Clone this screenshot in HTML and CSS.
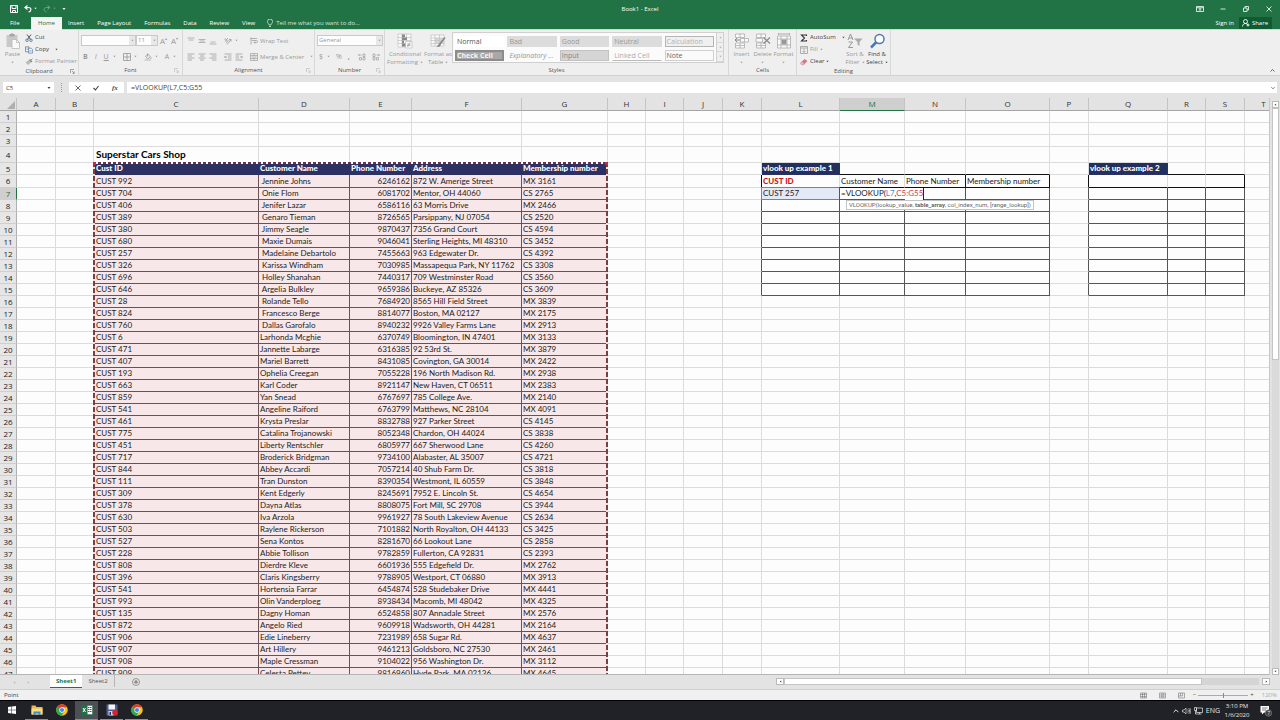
FILE: index.html
```html
<!DOCTYPE html>
<html lang="en">
<head>
    <meta charset="UTF-8">
    <title>Book1 - Excel</title>
    <link rel="stylesheet" href="styles.css">
</head>
<body>
<svg class="sprite" aria-hidden="true">
    <symbol id="i-save" viewBox="0 0 16 16"><path d="M1 1h14v14H1zM4 1v6h8V1M5 15v-4h6v4" fill="none" stroke="currentColor" stroke-width="2"/></symbol>
    <symbol id="i-undo" viewBox="0 0 16 16"><path d="M7 1L2 5l5 4M2 5h7c7 0 6 8 0 9" fill="none" stroke="currentColor" stroke-width="2.4"/></symbol>
    <symbol id="i-redo" viewBox="0 0 16 16"><path d="M9 1l5 4-5 4M14 5H7c-7 0-6 8 0 9" fill="none" stroke="currentColor" stroke-width="2"/></symbol>
    <symbol id="i-down" viewBox="0 0 8 8"><path d="M1 2h6L4 6z" fill="currentColor"/></symbol>
    <symbol id="i-left" viewBox="0 0 8 8"><path d="M6 1v6L2 4z" fill="currentColor"/></symbol>
    <symbol id="i-right" viewBox="0 0 8 8"><path d="M2 1v6l4-3z" fill="currentColor"/></symbol>
    <symbol id="i-up" viewBox="0 0 8 8"><path d="M1 6h6L4 2z" fill="currentColor"/></symbol>
    <symbol id="i-chev-up" viewBox="0 0 10 10"><path d="M1 7l4-4 4 4" fill="none" stroke="currentColor" stroke-width="1.6"/></symbol>
    <symbol id="i-chev-down" viewBox="0 0 10 10"><path d="M1 3l4 4 4-4" fill="none" stroke="currentColor" stroke-width="1.8"/></symbol>
    <symbol id="i-launch" viewBox="0 0 10 10"><path d="M1 8V1h7M4 4l4 4M8.500 5v4H5" fill="none" stroke="currentColor"/></symbol>
    <symbol id="i-bulb" viewBox="0 0 12 16"><path d="M4 12c0-3-3-3-3-7a5 5 0 0 1 10 0c0 4-3 4-3 7zM4 15h4" fill="none" stroke="currentColor" stroke-width="1.6"/></symbol>
    <symbol id="i-person" viewBox="0 0 16 16"><circle cx="7" cy="5" r="4" fill="none" stroke="currentColor" stroke-width="1.8"/><path d="M1 15c0-4 3-6 6-6s4 2 5 3M12 9v6M9 12h6" fill="none" stroke="currentColor" stroke-width="1.8"/></symbol>
    <symbol id="i-ribbon" viewBox="0 0 16 12"><path d="M1 1h14v10H1zM1 3.500h14M8 10V5M5.500 7L8 5l2.500 2" fill="none" stroke="currentColor" stroke-width="1.6"/></symbol>
    <symbol id="i-min" viewBox="0 0 12 12"><path d="M1 6h10" stroke="currentColor" stroke-width="1.6"/></symbol>
    <symbol id="i-max" viewBox="0 0 12 12"><path d="M1 4h7v7H1zM4 4V1h7v7H8" fill="none" stroke="currentColor" stroke-width="1.6"/></symbol>
    <symbol id="i-close" viewBox="0 0 12 12"><path d="M1 1l10 10M11 1L1 11" stroke="currentColor" stroke-width="1.6"/></symbol>
    <symbol id="i-check" viewBox="0 0 12 12"><path d="M1 6l4 4 6-8" fill="none" stroke="currentColor" stroke-width="2.2"/></symbol>
    <symbol id="i-paste" viewBox="0 0 28 32"><path d="M1 4h22v24H1z" fill="#c9c9c9"/><path d="M7 2h3c0-2 4-2 4 0h3v5H7z" fill="#a5a5a5"/><path d="M12 13h9l6 6v12H12z" fill="#fafafa" stroke="#b5b5b5" stroke-width="1.500"/><path d="M21 13v6h6" fill="none" stroke="#b5b5b5" stroke-width="1.500"/></symbol>
    <symbol id="i-cut" viewBox="0 0 16 16"><path d="M4 1l7 10M12 1L5 11" stroke="#444" stroke-width="1.8"/><circle cx="4" cy="12.500" r="2.500" fill="none" stroke="#3a6ea5" stroke-width="1.6"/><circle cx="12" cy="12.500" r="2.500" fill="none" stroke="#3a6ea5" stroke-width="1.6"/></symbol>
    <symbol id="i-copy" viewBox="0 0 18 16"><path d="M1 1h8v11H1z" fill="#fff" stroke="#555" stroke-width="1.4"/><path d="M8 4h6l3 3v8H8z" fill="#fff" stroke="#3a6ea5" stroke-width="1.4"/><path d="M3 4h4M3 7h4M10 9h5M10 12h5" stroke="#3a6ea5"/></symbol>
    <symbol id="i-brush" viewBox="0 0 16 16"><path d="M1 9l6-5 5 5-6 5z" fill="#bbb"/><path d="M8 4l2-2 5 5-3 2z" fill="#888"/><path d="M12 4l3-3" stroke="#999" stroke-width="2"/></symbol>
    <symbol id="i-border" viewBox="0 0 16 16"><path d="M1 1h14v14H1zM8 1v14M1 8h14" fill="none" stroke="#8a8a8a" stroke-width="1.400"/></symbol>
    <symbol id="i-fillc" viewBox="0 0 16 16"><path d="M3 6l5-4 5 6-6 4zM7 1v6M14 9v3" fill="none" stroke="#999" stroke-width="1.500"/><path d="M1 14h13" stroke="#ccc" stroke-width="3"/></symbol>
    <symbol id="i-lines-top" viewBox="0 0 16 16"><path d="M1 2h14M3 6h10" stroke="#a5a5a5" stroke-width="1.6"/></symbol>
    <symbol id="i-lines-mid" viewBox="0 0 16 16"><path d="M1 5h14M3 8h10M1 11h14" stroke="#a5a5a5" stroke-width="1.6"/></symbol>
    <symbol id="i-lines-bot" viewBox="0 0 16 16"><path d="M3 10h10M1 14h14" stroke="#a5a5a5" stroke-width="1.6"/></symbol>
    <symbol id="i-al-left" viewBox="0 0 16 16"><path d="M1 2h14M1 6h9M1 10h14M1 14h9" stroke="#a0a0a0" stroke-width="1.6"/></symbol>
    <symbol id="i-al-center" viewBox="0 0 16 16"><path d="M1 2h14M4 6h8M1 10h14M4 14h8" stroke="#a0a0a0" stroke-width="1.6"/></symbol>
    <symbol id="i-al-right" viewBox="0 0 16 16"><path d="M1 2h14M6 6h9M1 10h14M6 14h9" stroke="#a0a0a0" stroke-width="1.6"/></symbol>
    <symbol id="i-orient" viewBox="0 0 16 16"><path d="M2 9l6-7M4 12l5-6M1 5c2-3 5 0 3 3M6 15L14 5M10 5h4v4" fill="none" stroke="#999" stroke-width="1.6"/></symbol>
    <symbol id="i-indent" viewBox="0 0 16 16"><path d="M1 2h14M8 6h7M8 10h7M1 14h14M6 8H1M3 6L1 8l2 2" fill="none" stroke="#999" stroke-width="1.500"/></symbol>
    <symbol id="i-wrap" viewBox="0 0 16 16"><path d="M2 1v14M1 3h13M4 7h9c3 0 3 4 0 4H8M10 9l-2 2 2 2" fill="none" stroke="#999" stroke-width="1.500"/></symbol>
    <symbol id="i-merge" viewBox="0 0 16 16"><path d="M1 1h14v14H1zM1 5h14M1 11h14M8 1v4M8 11v4M3 8h10" fill="none" stroke="#999" stroke-width="1.300"/></symbol>
    <symbol id="i-dec" viewBox="0 0 16 16"><path d="M1 4h6M3 2L1 4l2 2M10 2h4v5h-4zM3 9h4v5H3zM10 9h4v5h-4z" fill="none" stroke="#999" stroke-width="1.300"/></symbol>
    <symbol id="i-cond" viewBox="0 0 32 32"><path d="M2 2h26v26H2zM2 9h26M2 15h26M2 21h26M10 2v26M19 2v26" fill="#fafafa" stroke="#aaa"/><path d="M10 3h6v5h-6zM10 9h10v5H10zM10 15h4v5h-4zM10 21h8v6h-8z" fill="#888"/><path d="M17 17h13v13H17z" fill="#fafafa" stroke="#aaa"/><path d="M20 22h7M20 25h7M26 19l-5 9" stroke="#777"/></symbol>
    <symbol id="i-fmt" viewBox="0 0 32 32"><path d="M2 4h26v22H2zM2 10h26M2 15h26M2 21h26M10 4v22M19 4v22" fill="#fafafa" stroke="#aaa"/><path d="M10 10h18v11H10z" fill="#c4c4c4" fill-opacity=".7"/><path d="M29 8L19 20l-6 8c5 1 9-2 9-6l9-12z" fill="#888"/></symbol>
    <symbol id="i-cell-ins" viewBox="0 0 32 32"><path d="M3 2h18v7H3zM12 2v7M3 20h18v10H3zM3 25h18M12 20v10M13 11h16v7H13zM21 11v7" fill="#fafafa" stroke="#aaa" stroke-width="1.500"/><path d="M12 14H2M6 10l-4 4 4 4" fill="none" stroke="#888" stroke-width="2"/></symbol>
    <symbol id="i-cell-del" viewBox="0 0 32 32"><path d="M3 2h18v7H3zM12 2v7M3 20h18v10H3zM3 25h18M12 20v10M2 11h13v7H2z" fill="#fafafa" stroke="#aaa" stroke-width="1.500"/><path d="M17 9l13 12M30 9L17 21" fill="none" stroke="#888" stroke-width="2.400"/></symbol>
    <symbol id="i-cell-fmt" viewBox="0 0 32 32"><path d="M3 6h26v24H3zM3 12h26M3 24h26M10 6v24M22 6v24" fill="#fafafa" stroke="#aaa" stroke-width="1.500"/><path d="M11 13h10v10H11z" fill="#999"/><path d="M5 2h22M5 0v4M27 0v4" stroke="#999" stroke-width="1.500"/></symbol>
    <symbol id="i-fill" viewBox="0 0 16 16"><path d="M1 1h14v14H1zM1 4h14M8 5v8M5 10l3 3 3-3" fill="none" stroke="#999" stroke-width="1.500"/></symbol>
    <symbol id="i-sum" viewBox="0 0 14 16"><path d="M12 4V2H2l6 6-6 6h10v-2" fill="none" stroke="#333" stroke-width="2.200"/></symbol>
    <symbol id="i-erase" viewBox="0 0 16 16"><path d="M1 10l8-8 6 4-8 8H4z" fill="#e0718c"/><path d="M1 10l3-3 5 5-2 2H4z" fill="#f3bcc9" stroke="#a06070" stroke-width=".6"/></symbol>
    <symbol id="i-sort" viewBox="0 0 32 32"><path d="M2 14L7 2l5 12M4 10h7M3 18h8L3 29h9" fill="none" stroke="#999" stroke-width="2"/><path d="M14 11h17l-6 7v8l-4-3v-5z" fill="#aaa"/></symbol>
    <symbol id="i-find" viewBox="0 0 32 32"><path d="M15 18L4 29" stroke="#4a78b5" stroke-width="5"/><circle cx="21" cy="12" r="9" fill="#fdfdfd" stroke="#4a78b5" stroke-width="3"/></symbol>
    <symbol id="i-plus" viewBox="0 0 16 16"><circle cx="8" cy="8" r="7" fill="none" stroke="#777" stroke-width="1.400"/><path d="M8 4v8M4 8h8" stroke="#666" stroke-width="1.800"/></symbol>
    <symbol id="i-view1" viewBox="0 0 14 12"><path d="M1 1h12v10H1zM1 4h12M1 8h12M5 1v10M9 1v10" fill="none" stroke="#777" stroke-width="1.200"/></symbol>
    <symbol id="i-view2" viewBox="0 0 14 12"><path d="M1 1h12v10H1zM4 3h6v6H4zM5 5h4M5 7h4" fill="none" stroke="#777" stroke-width="1.200"/></symbol>
    <symbol id="i-view3" viewBox="0 0 14 12"><path d="M1 1h12v10H1zM5 1v6M9 1v6H1" fill="none" stroke="#777" stroke-width="1.200"/></symbol>
    <symbol id="i-win" viewBox="0 0 16 16"><path d="M0 2.200l7-1v6.300H0zM8 1l8-1v7.500H8zM0 8.500h7v6.300l-7-1zM8 8.500h8V16l-8-1z" fill="#fff"/></symbol>
    <symbol id="i-folder" viewBox="0 0 24 22"><path d="M1 2h8l2 3h12v15H1z" fill="#e8b84a"/><path d="M1 8h22v12H1z" fill="#fbdc83"/><path d="M5 21v-7h14v7h-4v-3H9v3z" fill="#3b8fd0"/></symbol>
    <symbol id="i-chrome" viewBox="0 0 24 24"><circle cx="12" cy="12" r="11.500" fill="#fbc116"/><path d="M12 12L2 6.200a11.500 11.500 0 0 0 9 17.200l5.500-9z" fill="#2da94f"/><path d="M2 6.200A11.500 11.500 0 0 1 22 6.300H12L7 9.500z" fill="#e33b2e"/><circle cx="12" cy="12" r="5.300" fill="#fff"/><circle cx="12" cy="12" r="4.200" fill="#4285f4"/></symbol>
    <symbol id="i-excel" viewBox="0 0 24 22"><path d="M11 2h12v18H11z" fill="#fff" stroke="#1f7145"/><path d="M14 5h3v2h-3zM18 5h3v2h-3zM14 9h3v2h-3zM18 9h3v2h-3zM14 13h3v2h-3zM18 13h3v2h-3z" fill="#1f7145"/><path d="M0 2l13-2v22L0 20z" fill="#1f7145"/><path d="M4 7l5 8M9 7l-5 8" stroke="#fff" stroke-width="2"/></symbol>
    <symbol id="i-disk" viewBox="0 0 24 24"><path d="M1 1h22v22H1z" fill="#4a5f9c"/><path d="M5 1h13v10H5z" fill="#f2f4fa"/><path d="M5 14h10v9H5z" fill="#cfd6e8"/><path d="M7 16h3v6H7z" fill="#26345f"/><circle cx="18" cy="17" r="5.500" fill="#d8232a"/></symbol>
    <symbol id="i-vol" viewBox="0 0 18 14"><path d="M1 5h3l4-4v12L4 9H1zM11 4c2 2 2 4 0 6M13 2c3 3 3 7 0 10M15.500 1c3 4 3 8 0 12" fill="none" stroke="#e8e8e8" stroke-width="1.300"/></symbol>
    <symbol id="i-net" viewBox="0 0 18 16"><path d="M5 2h12v9H5zM11 11v3M7 14h8M1 1h4v6H1zM3 7v7h4" fill="none" stroke="#e8e8e8" stroke-width="1.400"/></symbol>
    <symbol id="i-note" viewBox="0 0 24 24"><path d="M1 2h17v13H8l-4 4v-4H1z" fill="#fff"/><path d="M4 6h11M4 10h8" stroke="#333" stroke-width="1.300"/><circle cx="17" cy="16" r="6.500" fill="#3c3e43" stroke="#999"/></symbol>
</svg>

<header class="top">
    <div class="titlebar">
        <div class="qat">
            <button aria-label="Save"><svg class="ic8"><use href="#i-save"/></svg></button>
            <button aria-label="Undo"><svg class="ic8"><use href="#i-undo"/></svg><svg class="ic3"><use href="#i-down"/></svg></button>
            <button class="dim" aria-label="Redo"><svg class="ic8"><use href="#i-redo"/></svg><svg class="ic3"><use href="#i-down"/></svg></button>
            <button aria-label="Customize"><svg class="ic4"><use href="#i-down"/></svg></button>
        </div>
        <div class="title">Book1 - Excel</div>
        <div class="winbtns">
            <button aria-label="Ribbon options"><svg class="ic8"><use href="#i-ribbon"/></svg></button>
            <button aria-label="Minimize"><svg class="ic6"><use href="#i-min"/></svg></button>
            <button aria-label="Restore"><svg class="ic6"><use href="#i-max"/></svg></button>
            <button aria-label="Close"><svg class="ic6"><use href="#i-close"/></svg></button>
        </div>
    </div>
    <nav class="tabs">
        <a class="file" href="#">File</a>
        <a class="active" href="#">Home</a>
        <a href="#">Insert</a>
        <a href="#">Page Layout</a>
        <a href="#">Formulas</a>
        <a href="#">Data</a>
        <a href="#">Review</a>
        <a href="#">View</a>
        <a class="tell" href="#"><svg class="ic8"><use href="#i-bulb"/></svg>Tell me what you want to do...</a>
        <a class="signin" href="#">Sign in</a>
        <a class="share" href="#"><svg class="ic8"><use href="#i-person"/></svg>Share</a>
    </nav>
</header>

<section class="ribbon">
    <div class="group clipboard">
        <div class="body">
            <button class="big off"><svg class="ic16"><use href="#i-paste"/></svg>Paste<svg class="ic3"><use href="#i-down"/></svg></button>
            <div class="stack">
                <button><svg class="ic8"><use href="#i-cut"/></svg>Cut</button>
                <button><svg class="ic8"><use href="#i-copy"/></svg>Copy<svg class="ic3 gapl"><use href="#i-down"/></svg></button>
                <button class="off"><svg class="ic8"><use href="#i-brush"/></svg>Format Painter</button>
            </div>
        </div>
        <div class="name">Clipboard<svg class="launch"><use href="#i-launch"/></svg></div>
    </div>
    <div class="group font">
        <div class="body rows">
            <div class="line">
                <span class="combo"><select class="fontname" aria-label="Font" disabled><option></option></select><i><svg class="ic3"><use href="#i-down"/></svg></i></span>
                <span class="combo"><select class="fontsize" aria-label="Font size" disabled><option>11</option></select><i><svg class="ic3"><use href="#i-down"/></svg></i></span>
                <button class="off grow" aria-label="Grow font">A<sup>▴</sup></button>
                <button class="off shrink" aria-label="Shrink font">A<sup>▾</sup></button>
            </div>
            <div class="line glyphs">
                <button class="off"><b>B</b></button>
                <button class="off"><i>I</i></button>
                <button class="off"><u>U</u><svg class="ic3 gapl"><use href="#i-down"/></svg></button>
                <button class="off sep" aria-label="Borders"><svg class="ic8"><use href="#i-border"/></svg><svg class="ic3 gapl"><use href="#i-down"/></svg></button>
                <button class="off sep" aria-label="Fill colour"><svg class="ic8"><use href="#i-fillc"/></svg><svg class="ic3 gapl"><use href="#i-down"/></svg></button>
                <button class="off">A<svg class="ic3 gapl"><use href="#i-down"/></svg></button>
            </div>
        </div>
        <div class="name">Font<svg class="launch pale"><use href="#i-launch"/></svg></div>
    </div>
    <div class="group align">
        <div class="body cols">
            <div class="rows">
                <div class="line tools">
                    <button aria-label="Top align"><svg class="ic8"><use href="#i-lines-top"/></svg></button>
                    <button aria-label="Middle align"><svg class="ic8"><use href="#i-lines-mid"/></svg></button>
                    <button aria-label="Bottom align"><svg class="ic8"><use href="#i-lines-bot"/></svg></button>
                    <button class="sep off" aria-label="Orientation"><svg class="ic8"><use href="#i-orient"/></svg><svg class="ic3"><use href="#i-down"/></svg></button>
                </div>
                <div class="line tools">
                    <button aria-label="Align left"><svg class="ic8"><use href="#i-al-left"/></svg></button>
                    <button aria-label="Center"><svg class="ic8"><use href="#i-al-center"/></svg></button>
                    <button aria-label="Align right"><svg class="ic8"><use href="#i-al-right"/></svg></button>
                    <button class="sep" aria-label="Decrease indent"><svg class="ic8"><use href="#i-indent"/></svg></button>
                    <button aria-label="Increase indent"><svg class="ic8 flip"><use href="#i-indent"/></svg></button>
                </div>
            </div>
            <div class="rows wraps">
                <div class="line"><button class="off"><svg class="ic8"><use href="#i-wrap"/></svg>Wrap Text</button></div>
                <div class="line"><button class="off"><svg class="ic8"><use href="#i-merge"/></svg>Merge &amp; Center<svg class="ic3 gapl"><use href="#i-down"/></svg></button></div>
            </div>
        </div>
        <div class="name">Alignment<svg class="launch pale"><use href="#i-launch"/></svg></div>
    </div>
    <div class="group number">
        <div class="body rows">
            <div class="line"><span class="combo"><select class="numfmt" aria-label="Number format" disabled><option>General</option></select><i><svg class="ic3"><use href="#i-down"/></svg></i></span></div>
            <div class="line glyphs money">
                <button class="off">$<svg class="ic3 gapl"><use href="#i-down"/></svg></button>
                <button class="off">%</button>
                <button class="off"><b>,</b></button>
                <button class="off sep" aria-label="Increase decimal"><svg class="ic8"><use href="#i-dec"/></svg></button>
                <button class="off" aria-label="Decrease decimal"><svg class="ic8 flip"><use href="#i-dec"/></svg></button>
            </div>
        </div>
        <div class="name">Number<svg class="launch pale"><use href="#i-launch"/></svg></div>
    </div>
    <div class="group styles">
        <div class="body">
            <button class="big off"><svg class="ic16"><use href="#i-cond"/></svg>Conditional<span>Formatting <svg class="ic3"><use href="#i-down"/></svg></span></button>
            <button class="big off"><svg class="ic16"><use href="#i-fmt"/></svg>Format as<span>Table <svg class="ic3"><use href="#i-down"/></svg></span></button>
            <div class="gallery">
                <button class="s-normal">Normal</button>
                <button class="s-fill">Bad</button>
                <button class="s-fill">Good</button>
                <button class="s-fill">Neutral</button>
                <button class="s-calc">Calculation</button>
                <button class="s-check">Check Cell</button>
                <button class="s-expl">Explanatory ...</button>
                <button class="s-input">Input</button>
                <button class="s-link">Linked Cell</button>
                <button class="s-note">Note</button>
            </div>
            <div class="spin">
                <button aria-label="Previous styles"><svg class="ic3"><use href="#i-up"/></svg></button>
                <button aria-label="Next styles"><svg class="ic3"><use href="#i-down"/></svg></button>
                <button aria-label="More styles"><svg class="ic3"><use href="#i-down"/></svg></button>
            </div>
        </div>
        <div class="name">Styles</div>
    </div>
    <div class="group cells">
        <div class="body">
            <button class="big off"><svg class="ic16"><use href="#i-cell-ins"/></svg>Insert<svg class="ic3"><use href="#i-down"/></svg></button>
            <button class="big off"><svg class="ic16"><use href="#i-cell-del"/></svg>Delete<svg class="ic3"><use href="#i-down"/></svg></button>
            <button class="big off"><svg class="ic16"><use href="#i-cell-fmt"/></svg>Format<svg class="ic3"><use href="#i-down"/></svg></button>
        </div>
        <div class="name">Cells</div>
    </div>
    <div class="group editing">
        <div class="body">
            <div class="stack">
                <button><svg class="ic8"><use href="#i-sum"/></svg>AutoSum<svg class="ic3 gapl"><use href="#i-down"/></svg></button>
                <button class="off"><svg class="ic8"><use href="#i-fill"/></svg>Fill<svg class="ic3"><use href="#i-down"/></svg></button>
                <button><svg class="ic8"><use href="#i-erase"/></svg>Clear<svg class="ic3"><use href="#i-down"/></svg></button>
            </div>
            <button class="big off"><svg class="ic16"><use href="#i-sort"/></svg>Sort &amp;<span>Filter <svg class="ic3"><use href="#i-down"/></svg></span></button>
            <button class="big"><svg class="ic16"><use href="#i-find"/></svg>Find &amp;<span>Select <svg class="ic3"><use href="#i-down"/></svg></span></button>
        </div>
        <div class="name">Editing</div>
    </div>
    <button class="collapse" aria-label="Collapse ribbon"><svg class="ic5"><use href="#i-chev-up"/></svg></button>
</section>

<section class="formulabar">
    <div class="namebox"><input type="text" value="C5" aria-label="Name box"><svg class="ic4"><use href="#i-down"/></svg></div>
    <span class="grip"></span>
    <div class="fxbtns">
        <button aria-label="Cancel"><svg class="ic6"><use href="#i-close"/></svg></button>
        <button aria-label="Enter"><svg class="ic6"><use href="#i-check"/></svg></button>
        <button class="fx">fx</button>
    </div>
    <input class="formula" type="text" value="=VLOOKUP(L7,C5:G55" aria-label="Formula bar">
    <button class="expand" aria-label="Expand formula bar"><svg class="ic4"><use href="#i-chev-down"/></svg></button>
</section>

<main class="work">
    <div class="sheet">
        <table id="grid">
            <colgroup id="cols"></colgroup>
            <thead><tr id="heads"></tr></thead>
            <tbody id="rows"></tbody>
        </table>
        <div class="ants"></div>
    </div>
    <div class="vscroll">
        <button aria-label="Scroll up"><svg class="ic3"><use href="#i-up"/></svg></button>
        <div class="track"><div class="thumb"></div></div>
        <button aria-label="Scroll down"><svg class="ic3"><use href="#i-down"/></svg></button>
    </div>
</main>

<div class="sheettabs">
    <div class="arrows"><svg class="ic3"><use href="#i-left"/></svg><svg class="ic3"><use href="#i-right"/></svg></div>
    <a class="active" href="#">Sheet1</a>
    <a href="#">Sheet2</a>
    <button class="add" aria-label="New sheet"><svg class="ic8"><use href="#i-plus"/></svg></button>
    <div class="hscroll">
        <button aria-label="Scroll left"><svg class="ic3"><use href="#i-left"/></svg></button>
        <div class="track"><div class="thumb"></div></div>
        <button aria-label="Scroll right"><svg class="ic3"><use href="#i-right"/></svg></button>
    </div>
</div>

<footer class="status">
    <span class="mode">Point</span>
    <button aria-label="Normal view"><svg class="ic7"><use href="#i-view1"/></svg></button>
    <button aria-label="Page layout view"><svg class="ic7"><use href="#i-view2"/></svg></button>
    <button aria-label="Page break view"><svg class="ic7"><use href="#i-view3"/></svg></button>
    <div class="zoom"><span>−</span><input type="range" min="10" max="400" value="205" aria-label="Zoom"><span>+</span></div>
    <span class="pct">120%</span>
</footer>

<div class="taskbar">
    <button aria-label="Start"><svg class="ic8"><use href="#i-win"/></svg></button>
    <button class="open" aria-label="File Explorer"><svg class="ic12"><use href="#i-folder"/></svg></button>
    <button aria-label="Chrome"><svg class="ic12"><use href="#i-chrome"/></svg></button>
    <button class="open current" aria-label="Excel"><svg class="ic12"><use href="#i-excel"/></svg></button>
    <button class="open" aria-label="Recorder"><svg class="ic12"><use href="#i-disk"/></svg></button>
    <button class="open" aria-label="Chrome window"><svg class="ic12"><use href="#i-chrome"/></svg></button>
    <div class="tray">
        <svg class="ic6"><use href="#i-chev-up"/></svg>
        <svg class="ic9"><use href="#i-vol"/></svg>
        <svg class="ic9"><use href="#i-net"/></svg>
        <span class="lang">ENG</span>
        <div class="clock">3:10 PM<br>1/6/2020</div>
        <div class="notes"><svg class="ic12"><use href="#i-note"/></svg><span>7</span></div>
    </div>
</div>
<script src="sheet.js"></script>
</body>
</html>
```
FILE: styles.css
```css
*{
    box-sizing: border-box;
}
body{
    margin: 0;
    height: 100vh;
    display: flex;
    flex-direction: column;
    overflow: hidden;
    background: #e3e3e3;
    color: #444;
    font: 6px/8px "Open Sans", "Noto Sans", sans-serif;
}
button,input,select{
    margin: 0;
    padding: 0;
    border: 0;
    background: none;
    color: inherit;
    font: inherit;
    border-radius: 0;
    outline: none;
}
button{
    display: flex;
    align-items: center;
    justify-content: center;
    white-space: nowrap;
}
a{
    color: inherit;
    text-decoration: none;
}
svg{
    flex: none;
    display: block;
}
.sprite{
    position: absolute;
    width: 0;
    height: 0;
}
.ic3{ width: 3px; height: 3px; }
.ic4{ width: 4px; height: 4px; }
.ic5{ width: 5px; height: 5px; }
.ic6{ width: 6px; height: 6px; }
.ic7{ width: 7px; height: 7px; }
.ic8{ width: 8px; height: 8px; }
.ic9{ width: 9px; height: 8px; }
.ic12{ width: 12px; height: 12px; }
.ic16{ width: 16px; height: 16px; }
.flip{ transform: scaleX(-1); }
.gapl{ margin-left: 4px; }

/* title bar and tabs */
.top{
    background: #217346;
    color: #fff;
    flex: none;
}
.titlebar{
    height: 17px;
    display: grid;
    grid-template-columns: 1fr auto 1fr;
    align-items: center;
}
.qat{
    display: flex;
    align-items: center;
    gap: 6px;
    padding-left: 10px;
}
.qat button{
    gap: 2px;
}
.qat .dim{
    opacity: .35;
}
.winbtns{
    display: flex;
    justify-content: flex-end;
}
.winbtns button{
    width: 23px;
    height: 14px;
}
.tabs{
    height: 13px;
    display: flex;
    line-height: 13px;
    border-bottom: 1px solid #c5dccf;
}
.tabs a{
    padding: 0 7px 0 6px;
    white-space: nowrap;
}
.tabs .file{
    width: 31px;
    padding: 0 0 0 10px;
}
.tabs .active{
    background: #f4f4f4;
    color: #217346;
    width: 31px;
    padding: 0;
    text-align: center;
    height: 13px;
}
.tabs .tell,.tabs .share{
    display: flex;
    align-items: center;
    gap: 2px;
}
.tabs .tell{
    padding-left: 4px;
}
.tell{
    color: #d5e6dc;
}
.tabs .signin{
    margin-left: auto;
    padding-right: 5px;
}
.tabs .share{
    background: #0f5c33;
    padding: 0 4px 0 3px;
    margin-right: 8px;
}

/* ribbon */
.ribbon{
    flex: none;
    height: 46px;
    display: flex;
    background: #efefef;
    border-bottom: 1px solid #d2d2d2;
}
.group{
    display: flex;
    flex-direction: column;
    border-right: 1px solid #d8d8d8;
    padding-top: 2px;
}
.group .body{
    height: 35px;
    display: flex;
}
.name{
    position: relative;
    line-height: 9px;
    text-align: center;
    color: #555;
}
.launch{
    position: absolute;
    right: 3px;
    top: 2px;
    width: 5px;
    height: 5px;
    color: #555;
}
.pale{
    color: #aaa;
}
.off{
    color: #999;
}
.big{
    flex-direction: column;
    justify-content: flex-start;
    padding-top: 1px;
    line-height: 8px;
}
.big .ic16{
    margin-bottom: 1px;
}
.big > .ic3{
    margin-top: 3px;
}
.big span{
    display: flex;
    align-items: center;
    gap: 2px;
}
.stack{
    display: flex;
    flex-direction: column;
    gap: 1px;
}
.stack button{
    justify-content: flex-start;
    height: 11px;
    gap: 2px;
    line-height: 11px;
}
.rows{
    display: flex;
    flex-direction: column;
}
.line{
    height: 15px;
    margin-top: 1px;
    display: flex;
    align-items: center;
}
.clipboard{ width: 79px; }
.clipboard .big{ width: 25px; }
.font{ width: 104px; }
.align{ width: 132px; }
.number{ width: 70px; }
.styles{ width: 344px; }
.cells{ width: 68px; }
.editing{ width: 94px; }
.group .rows.body{
    flex-direction: column;
    padding: 0 2px;
}
.combo{
    display: flex;
    height: 11px;
    border: 1px solid #c9c9c9;
    background: #fdfdfd;
}
.combo select{
    appearance: none;
    color: #999;
    opacity: 1;
    padding-left: 1px;
    line-height: 9px;
}
.combo i{
    display: flex;
    align-items: center;
    justify-content: center;
    width: 6px;
    background: #e8e8e8;
    color: #999;
}
.fontname{ width: 47px; }
.fontsize{ width: 14px; }
.numfmt{ width: 58px; }
.grow,.shrink{
    width: 12px;
    font-size: 8px;
}
sup{
    font-size: 4px;
    line-height: 4px;
    align-self: flex-start;
}
.glyphs{
    gap: 7px;
    padding-left: 2px;
    font-size: 7px;
}
.glyphs .sep .gapl{
    margin-left: 3px;
}
.money{
    gap: 6px;
}
.money .sep{
    margin-left: 2px;
}
.cols{
    padding-left: 4px;
    gap: 7px;
}
.tools{
    gap: 3px;
}
.tools .sep{
    margin-left: 4px;
    gap: 3px;
}
.wraps button{
    gap: 2px;
}
.styles .big{ width: 28px; }
.styles .big:first-child{ width: 38px; margin-left: 1px; }
.gallery{
    flex: 1;
    display: grid;
    grid-template-columns: repeat(5, 1fr);
    grid-template-rows: 11px 11px;
    gap: 3px;
    height: 31px;
    padding: 3px 2px;
    background: #fbfbfb;
    border: 1px solid #d0d0d0;
    font-size: 7px;
}
.gallery button{
    justify-content: flex-start;
    padding-left: 1px;
    min-width: 0;
    overflow: hidden;
    border: 1px solid transparent;
    color: #999;
}
.gallery .s-normal{ background: #fff; color: #555; }
.gallery .s-fill{ background: #dcdcdc; }
.gallery .s-calc{ background: #f0f0f0; border-color: #b5b5b5; color: #b0b0b0; }
.gallery .s-check{ background: #a8a8a8; border: 2px solid #8c8c8c; color: #f5f5f5; font-weight: bold; padding-left: 0; }
.gallery .s-expl{ font-style: italic; }
.gallery .s-input{ background: #d5d5d5; border-color: #c2c2c2; color: #888; }
.gallery .s-link{ border-bottom: 1px solid #bbb; color: #aaa; }
.gallery .s-note{ background: #fafafa; border-color: #cfcfcf; color: #666; }
.spin{
    width: 7px;
    height: 31px;
    margin: 0 4px 0 0;
    display: flex;
    flex-direction: column;
    border: 1px solid #d0d0d0;
    border-left: 0;
    color: #aaa;
}
.spin button{
    flex: 1;
    border-bottom: 1px solid #d8d8d8;
}
.cells .body{
    padding: 0 2px;
}
.cells .big{
    flex: 1;
}
.editing .body{
    padding-left: 3px;
}
.editing .stack{
    width: 44px;
}
.editing .big{
    width: 22px;
}
.collapse{
    margin: auto 5px 0 auto;
    height: 10px;
}

/* formula bar */
.formulabar{
    flex: none;
    height: 22px;
    padding: 6px 3px 5px;
    display: flex;
    align-items: stretch;
}
.namebox{
    width: 51px;
    display: flex;
    align-items: center;
    background: #fff;
    padding: 0 3px;
}
.namebox input{
    flex: 1;
    min-width: 0;
}
.grip{
    width: 1px;
    margin: 1px 7px;
    border-left: 1px dotted #999;
}
.fxbtns{
    display: flex;
    background: #fff;
    width: 55px;
    margin-right: 3px;
}
.fxbtns button{
    flex: 1;
}
.fx{
    font: italic bold 7px "Liberation Serif", serif;
}
.formula{
    flex: 1;
    background: #fff;
    padding-left: 4px;
    font-size: 7px;
}
.expand{
    background: #fff;
    width: 8px;
}

/* sheet */
.work{
    flex: 1;
    min-height: 0;
    display: flex;
}
.sheet{
    flex: 1;
    min-width: 0;
    overflow: hidden;
    position: relative;
    background: #fdfdfd;
    border-bottom: 1px solid #b5b5b5;
}
#grid{
    width: 1283px;
    table-layout: fixed;
    border-collapse: separate;
    border-spacing: 0;
    font: 8px/11px Lato, "Open Sans", sans-serif;
    color: #222;
}
#grid th,#grid td{
    padding: 0;
    height: 12px;
    border-right: 1px solid #dcdcdc;
    border-bottom: 1px solid #dcdcdc;
    white-space: pre;
    text-align: left;
}
#grid td{
    padding: 0 1px;
}
#grid thead th{
    height: 13px;
    background: #e3e3e3;
    border-right-color: #c4c4c4;
    border-bottom-color: #a5a5a5;
    font: 8px/12px "Open Sans", sans-serif;
    color: #333;
    text-align: center;
}
#grid tbody th{
    background: #e6e6e6;
    border-right-color: #b0b0b0;
    border-bottom-color: #cfcfcf;
    font: 8px/11px "Open Sans", sans-serif;
    text-align: center;
}
#grid thead th.corner{
    padding: 3px 2px 1px 7px;
}
.corner svg{
    width: 8px;
    height: 8px;
}
#grid th.on{
    background: #cfcfcf;
    color: #217346;
    border-bottom-color: #217346;
}
#grid tbody th.on{
    border-bottom-color: #cfcfcf;
    border-right-color: #217346;
}
#grid tr.tall th,#grid tr.tall td{
    height: 16px;
    line-height: 15px;
}
#grid tr.mid th,#grid tr.mid td{
    height: 13px;
    line-height: 12px;
}
#grid td.title{
    padding-left: 2px;
    font-size: 10px;
    font-weight: bold;
    color: #000;
}
#grid td.data{
    background: #f8e7e8;
    border-color: #6a5155;
}
#grid td.first{
    padding-left: 2px;
}
#grid td.num{
    text-align: right;
}
#grid td.dhead,#grid td.label{
    background: #2c3062;
    border-color: #2c3062;
    color: #fff;
    font-weight: 900;
}
#grid td.label{
    background: #20305f;
}
#grid td.thin-r{ border-right-color: #555; }
#grid td.thin-b{ border-bottom-color: #555; }
#grid td.thick-r{ border-right-color: #111; }
#grid td.thick-b{ border-bottom-color: #111; }
#grid td.red{
    color: #d0141b;
    font-weight: 900;
}
#grid td.ref,#grid td.edit{
    position: relative;
}
#grid td.ref{
    background: #e3e9f6;
}
.ref i{
    position: absolute;
    inset: -1px;
    border: 1px solid #5b86c8;
}
.edit .cell{
    position: absolute;
    z-index: 2;
    left: -1px;
    top: 0;
    height: 12px;
    padding-left: 2px;
    background: #fff;
    border-right: 1px solid #222;
}
.edit .frame{
    position: absolute;
    z-index: 3;
    inset: -1px;
    border-left: 1px solid #217346;
    border-bottom: 1px solid #217346;
}
.edit .cell .a{ color: #5b86c8; }
.edit .cell .b{ color: #c0404c; }
.tip{
    position: absolute;
    z-index: 4;
    left: 6px;
    top: 12px;
    padding: 0 2px;
    border: 1px solid #c4c4c4;
    background: #fff;
    color: #666;
    font: 6px/8px Roboto, sans-serif;
}
/* moving border round C5:G55 */
.ants{
    position: absolute;
    z-index: 1;
    left: 93px;
    top: 64px;
    width: 515px;
    height: 620px;
    background:
        linear-gradient(#c0303c, #c0303c) 0 0 / 3px 3px no-repeat,
        linear-gradient(#c0303c, #c0303c) 100% 0 / 3px 3px no-repeat,
        repeating-linear-gradient(90deg, #6e3145 0 3px, #fff 3px 5px) 0 0 / 100% 2px no-repeat,
        repeating-linear-gradient(#7a3f42 0 5px, #f3dcdc 5px 7px) 0 0 / 2px 100% no-repeat,
        repeating-linear-gradient(#7a3f42 0 5px, #f3dcdc 5px 7px) 100% 0 / 2px 100% no-repeat;
}
.vscroll{
    width: 11px;
    padding: 3px 1px 0 2px;
    display: flex;
    flex-direction: column;
    border-left: 1px solid #c8c8c8;
}
.vscroll button{
    height: 7px;
    background: #fff;
    border: 1px solid #bbb;
}
.vscroll .track{
    flex: 1;
    background: #dadada;
}
.vscroll .thumb{
    height: 45%;
    background: #fff;
    border: 1px solid #c4c4c4;
}

/* sheet tabs */
.sheettabs{
    flex: none;
    height: 15px;
    display: flex;
    border-bottom: 1px solid #d0d0d0;
    line-height: 13px;
}
.arrows{
    width: 50px;
    display: flex;
    align-items: center;
    gap: 11px;
    padding-left: 13px;
    color: #aaa;
}
.sheettabs a{
    padding: 0 6px;
    height: 12px;
    color: #555;
    border-right: 1px solid #b5b5b5;
}
.sheettabs a.active{
    height: 13px;
    background: #fff;
    color: #217346;
    font-weight: bold;
    border-right: 0;
    border-bottom: 1px solid #217346;
}
.add{
    margin-left: 17px;
}
.hscroll{
    width: 40%;
    margin-left: auto;
    padding: 3px 10px 4px 8px;
    display: flex;
}
.hscroll button{
    width: 8px;
    background: #fff;
    border: 1px solid #bbb;
}
.hscroll .track{
    flex: 1;
    background: #d5d5d5;
    margin-right: 3px;
}
.hscroll .thumb{
    width: 88%;
    height: 100%;
    background: #fff;
    border: 1px solid #c4c4c4;
}

/* status bar */
.status{
    flex: none;
    height: 10px;
    display: flex;
    align-items: center;
    gap: 12px;
    padding: 0 3px 0 4px;
    background: #f0f0f0;
}
.mode{
    margin-right: auto;
}
.zoom{
    display: flex;
    align-items: center;
    gap: 2px;
    margin-left: -4px;
}
.zoom input{
    appearance: none;
    width: 50px;
    height: 6px;
    background: linear-gradient(#aaa, #aaa) 0 3px / 100% 1px no-repeat;
}
.zoom input::-webkit-slider-thumb{
    appearance: none;
    width: 1px;
    height: 5px;
    background: #888;
}
.pct{
    color: #aaa;
    margin-left: -4px;
}

/* taskbar */
.taskbar{
    flex: none;
    height: 20px;
    display: flex;
    background: #202227;
    border-top: 1px solid #000;
    color: #e8e8e8;
}
.taskbar > button{
    width: 23px;
    margin-right: 2px;
    border-bottom: 1px solid transparent;
}
.taskbar .open{
    border-bottom-color: #5b9bd5;
}
.taskbar .current{
    background: #4a5053;
}
.tray{
    margin-left: auto;
    display: flex;
    align-items: center;
    gap: 3px;
    padding-right: 8px;
}
.lang,.clock{
    font-size: 7px;
    line-height: 9px;
}
.clock{
    width: 28px;
    text-align: center;
    font-size: 6px;
    margin-right: 6px;
}
.notes{
    position: relative;
}
.notes span{
    position: absolute;
    right: 2px;
    bottom: 0;
    font-size: 5px;
}
```
FILE: sheet.js
```js
var cols = 'ABCDEFGHIJKLMNOPQRST'.split('');
var widths = [39,38,165,91,62,110,86,38,38,39,39,78,65,61,84,39,79,38,39,38];
// first data row is sheet row 6
var data = [
    ['CUST 992',' Jennine Johns','6246162','872 W. Amerige Street','MX 3161'],
    ['CUST 704',' Onie Flom','6081702','Mentor, OH 44060','CS 2765'],
    ['CUST 406',' Jenifer Lazar','6586116','63 Morris Drive','MX 2466'],
    ['CUST 389',' Genaro Tieman','8726565','Parsippany, NJ 07054','CS 2520'],
    ['CUST 380',' Jimmy Seagle','9870437','7356 Grand Court','CS 4594'],
    ['CUST 680',' Maxie Dumais','9046041','Sterling Heights, MI 48310','CS 3452'],
    ['CUST 257',' Madelaine Debartolo','7455663','963 Edgewater Dr.','CS 4392'],
    ['CUST 326',' Karissa Windham','7030985','Massapequa Park, NY 11762','CS 3308'],
    ['CUST 696',' Holley Shanahan','7440317','709 Westminster Road','CS 3560'],
    ['CUST 646',' Argelia Bulkley','9659386','Buckeye, AZ 85326','CS 3609'],
    ['CUST 28',' Rolande Tello','7684920','8565 Hill Field Street','MX 3839'],
    ['CUST 824',' Francesco Berge','8814077','Boston, MA 02127','MX 2175'],
    ['CUST 760',' Dallas Garofalo','8940232','9926 Valley Farms Lane','MX 2913'],
    ['CUST 6','Larhonda Mcghie','6370749','Bloomington, IN 47401','MX 3133'],
    ['CUST 471','Jannette Labarge','6316385','92 53rd St.','MX 3879'],
    ['CUST 407','Mariel Barrett','8431085','Covington, GA 30014','MX 2422'],
    ['CUST 193','Ophelia Creegan','7055228','196 North Madison Rd.','MX 2938'],
    ['CUST 663','Karl Coder','8921147','New Haven, CT 06511','MX 2383'],
    ['CUST 859','Yan Snead','6767697','785 College Ave.','MX 2140'],
    ['CUST 541','Angeline Raiford','6763799','Matthews, NC 28104','MX 4091'],
    ['CUST 461','Krysta Preslar','8832788','927 Parker Street','CS 4145'],
    ['CUST 775','Catalina Trojanowski','8052348','Chardon, OH 44024','CS 3838'],
    ['CUST 451','Liberty Rentschler','6805977','667 Sherwood Lane','CS 4260'],
    ['CUST 717','Broderick Bridgman','9734100','Alabaster, AL 35007','CS 4721'],
    ['CUST 844','Abbey Accardi','7057214','40 Shub Farm Dr.','CS 3818'],
    ['CUST 111','Tran Dunston','8390354','Westmont, IL 60559','CS 3848'],
    ['CUST 309','Kent Edgerly','8245691','7952 E. Lincoln St.','CS 4654'],
    ['CUST 378','Dayna Atlas','8808075','Fort Mill, SC 29708','CS 3944'],
    ['CUST 630','Iva Arzola','9961927','78 South Lakeview Avenue','CS 2634'],
    ['CUST 503','Raylene Rickerson','7101882','North Royalton, OH 44133','CS 3425'],
    ['CUST 527','Sena Kontos','8281670','66 Lookout Lane','CS 2858'],
    ['CUST 228','Abbie Tollison','9782859','Fullerton, CA 92831','CS 2393'],
    ['CUST 808','Dierdre Kleve','6601936','555 Edgefield Dr.','MX 2762'],
    ['CUST 396','Claris Kingsberry','9788905','Westport, CT 06880','MX 3913'],
    ['CUST 541','Hortensia Farrar','6454874','528 Studebaker Drive','MX 4441'],
    ['CUST 993','Olin Vanderploeg','8938434','Macomb, MI 48042','MX 4325'],
    ['CUST 135','Dagny Homan','6524858','807 Annadale Street','MX 2576'],
    ['CUST 872','Angelo Ried','9609918','Wadsworth, OH 44281','MX 2164'],
    ['CUST 906','Edie Lineberry','7231989','658 Sugar Rd.','MX 4637'],
    ['CUST 907','Art Hillery','9461213','Goldsboro, NC 27530','MX 2461'],
    ['CUST 908','Maple Cressman','9104022','956 Washington Dr.','MX 3112'],
    ['CUST 909','Celesta Pettey','9816960','Hyde Park, MA 02136','MX 4645']
];
var text = {
    C4: 'Superstar Cars Shop',
    C5: 'Cust ID', D5: 'Customer Name', E5: 'Phone Number', F5: 'Address', G5: 'Membership number',
    L5: 'vlook up example 1', Q5: 'vlook up example 2',
    L6: 'CUST ID', M6: 'Customer Name', N6: 'Phone Number', O6: 'Membership number',
    L7: 'CUST 257<i></i>',
    M7: '<div class="cell">=VLOOKUP(<span class="a">L7</span>,<span class="b">C5:G55</span></div>' +
        '<div class="frame"></div>' +
        '<div class="tip">VLOOKUP(lookup_value, <b>table_array</b>, col_index_num, [range_lookup])</div>'
};
var classes = {C4: 'title', L5: 'label', Q5: 'label', L6: 'red', L7: 'ref', M7: 'edit'};
var rowClass = {4: 'tall', 6: 'mid'};

function has(list, c) {
    return list.indexOf(c) > -1;
}
function cellClass(c, r) {
    var cls = [];
    if (classes[c + r]) cls.push(classes[c + r]);
    if (has('CDEFG', c) && r == 5) cls.push('dhead');
    if (has('CDEFG', c) && r > 5) cls.push('data');
    if (c == 'C' && r > 4) cls.push('first');
    if (c == 'E' && r > 5) cls.push('num');
    // the two lookup tables
    if (r == 5 && has('MNORS', c)) cls.push('thick-b');
    if (r == 6) {
        if (has('KNOPS', c)) cls.push('thick-r');
        if (has('LMNOQRS', c)) cls.push('thick-b');
    }
    if (r > 6 && r < 16) {
        if (has('KLMNOPQRS', c)) cls.push('thin-r');
        if (has('LMNOQRS', c)) cls.push('thin-b');
    }
    return cls.join(' ');
}

var colHtml = '<col style="width:17px">';
var headHtml = '<th class="corner"><svg viewBox="0 0 8 8"><path d="M8 0v8H0z" fill="#b0b0b0"/></svg></th>';
for (var i = 0; i < cols.length; i++) {
    colHtml += '<col style="width:' + widths[i] + 'px">';
    headHtml += '<th' + (cols[i] == 'M' ? ' class="on"' : '') + '>' + cols[i] + '</th>';
}
document.getElementById('cols').innerHTML = colHtml;
document.getElementById('heads').innerHTML = headHtml;

var html = '';
for (var r = 1; r <= 47; r++) {
    html += '<tr class="' + (rowClass[r] || '') + '"><th' + (r == 7 ? ' class="on"' : '') + '>' + r + '</th>';
    for (var j = 0; j < cols.length; j++) {
        var c = cols[j];
        var t = text[c + r] || '';
        if (r > 5 && j > 1 && j < 7) {
            t = data[r - 6][j - 2];
        }
        html += '<td class="' + cellClass(c, r) + '">' + t + '</td>';
    }
    html += '</tr>';
}
document.getElementById('rows').innerHTML = html;
```
